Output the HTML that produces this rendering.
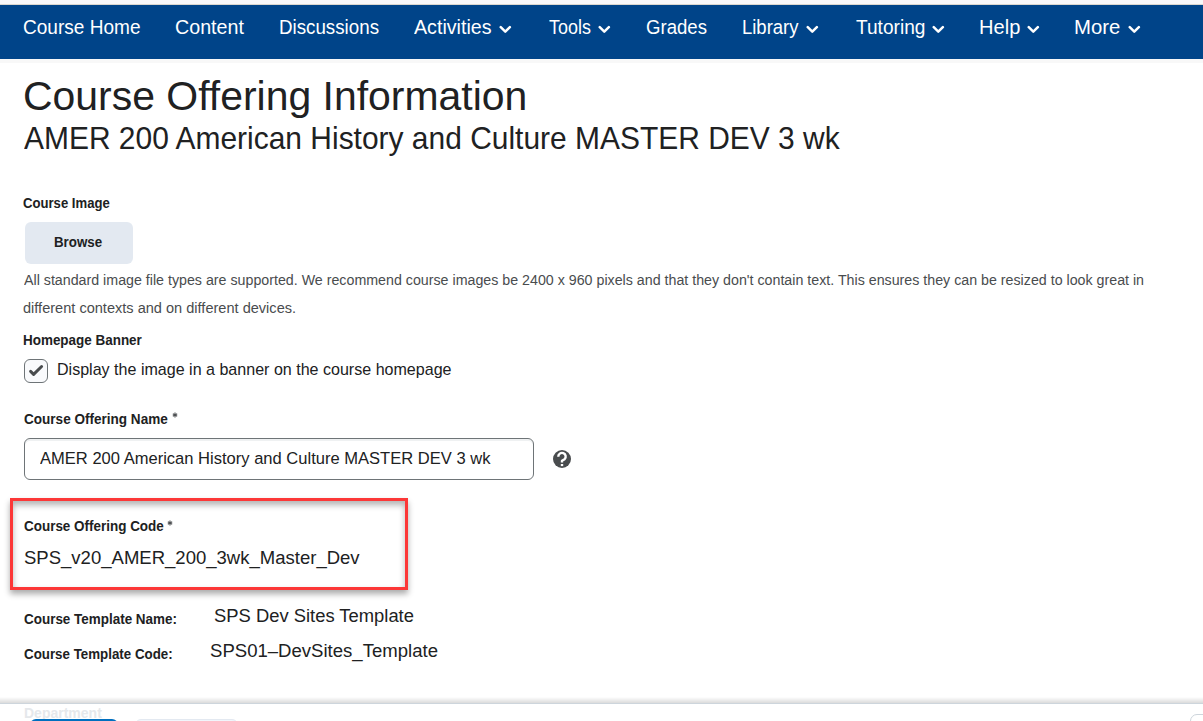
<!DOCTYPE html>
<html><head><meta charset="utf-8"><style>
html,body{margin:0;padding:0;}
body{width:1203px;height:721px;overflow:hidden;position:relative;background:#fff;font-family:"Liberation Sans",sans-serif;}
.t{position:absolute;white-space:nowrap;transform-origin:0 0;}
.abs{position:absolute;}
.chev{position:absolute;}
</style></head><body>
<div class="abs" style="left:0;top:0;width:1203px;height:4px;background:#f8f8fa"></div>
<div class="abs" style="left:0;top:4px;width:1203px;height:1px;background:#dcd7cf"></div>
<div class="abs" style="left:0;top:5px;width:1203px;height:54px;background:#004489"></div>
<div class="abs" style="left:0;top:59px;width:1203px;height:4px;background:#f8f8f8"></div>
<svg class="chev" style="left:499px;top:25px" width="13" height="9" viewBox="0 0 13 9"><path d="M1.75 2.2 L6.3 6.6 L10.85 2.2" fill="none" stroke="#fff" stroke-width="2.5" stroke-linecap="round" stroke-linejoin="round"/></svg><svg class="chev" style="left:598px;top:25px" width="13" height="9" viewBox="0 0 13 9"><path d="M1.75 2.2 L6.3 6.6 L10.85 2.2" fill="none" stroke="#fff" stroke-width="2.5" stroke-linecap="round" stroke-linejoin="round"/></svg><svg class="chev" style="left:806px;top:25px" width="13" height="9" viewBox="0 0 13 9"><path d="M1.75 2.2 L6.3 6.6 L10.85 2.2" fill="none" stroke="#fff" stroke-width="2.5" stroke-linecap="round" stroke-linejoin="round"/></svg><svg class="chev" style="left:932px;top:25px" width="13" height="9" viewBox="0 0 13 9"><path d="M1.75 2.2 L6.3 6.6 L10.85 2.2" fill="none" stroke="#fff" stroke-width="2.5" stroke-linecap="round" stroke-linejoin="round"/></svg><svg class="chev" style="left:1027px;top:25px" width="13" height="9" viewBox="0 0 13 9"><path d="M1.75 2.2 L6.3 6.6 L10.85 2.2" fill="none" stroke="#fff" stroke-width="2.5" stroke-linecap="round" stroke-linejoin="round"/></svg><svg class="chev" style="left:1128px;top:25px" width="13" height="9" viewBox="0 0 13 9"><path d="M1.75 2.2 L6.3 6.6 L10.85 2.2" fill="none" stroke="#fff" stroke-width="2.5" stroke-linecap="round" stroke-linejoin="round"/></svg>
<div class="abs" style="left:25px;top:222px;width:108px;height:42px;background:#e3e9f1;border-radius:6px"></div>
<div class="abs" style="left:24px;top:359px;width:22px;height:22px;border:1px solid #6e7477;border-radius:6px;background:#f9fafc"></div>
<svg class="abs" style="left:24px;top:359px" width="24" height="24" viewBox="0 0 24 24"><path d="M6.6 12.4 L9.6 15.4 L17.6 7.5" fill="none" stroke="#494c4e" stroke-width="3" stroke-linecap="round" stroke-linejoin="round"/></svg>
<div class="abs" style="left:24px;top:438px;width:508px;height:40px;border:1px solid #6e7477;border-radius:6px;background:#fff;box-shadow:inset 0 2px 0 0 rgba(177,185,190,.2)"></div>
<svg class="abs" style="left:553px;top:450px" width="18" height="18" viewBox="0 0 18 18"><circle cx="9" cy="9" r="9" fill="#494c4e"/><path d="M5.3 6.8 A3.7 3.7 0 1 1 11.6 9.2 L9 10.8 L9 12.6" fill="none" stroke="#fff" stroke-width="2.4" stroke-linejoin="round"/><rect x="7.8" y="14" width="2.4" height="2.1" fill="#fff"/></svg>
<div class="abs" style="left:10px;top:498px;width:392px;height:86px;border:3px solid #fc3737;box-shadow:0 4px 6px rgba(0,0,0,.33), inset 0 4px 6px rgba(0,0,0,.3)"></div>
<svg class="abs" style="left:166.7px;top:520.4px" width="6" height="6" viewBox="-3 -3 6 6"><g stroke="#494c4e" stroke-width="1.1"><line x1="0" y1="-2.5" x2="0" y2="2.5"/><line x1="-2.2" y1="-1.25" x2="2.2" y2="1.25"/><line x1="-2.2" y1="1.25" x2="2.2" y2="-1.25"/></g></svg>
<svg class="abs" style="left:171.7px;top:412.4px" width="6" height="6" viewBox="-3 -3 6 6"><g stroke="#494c4e" stroke-width="1.1"><line x1="0" y1="-2.5" x2="0" y2="2.5"/><line x1="-2.2" y1="-1.25" x2="2.2" y2="1.25"/><line x1="-2.2" y1="1.25" x2="2.2" y2="-1.25"/></g></svg>
<div class="t" style="left:23.05px;top:17.51px;font-size:19.84px;line-height:19.84px;color:#fff;font-weight:normal;transform:scaleX(0.9612)">Course Home</div><div class="t" style="left:175.02px;top:17.51px;font-size:19.84px;line-height:19.84px;color:#fff;font-weight:normal;transform:scaleX(0.9921)">Content</div><div class="t" style="left:278.5px;top:17.51px;font-size:19.84px;line-height:19.84px;color:#fff;font-weight:normal;transform:scaleX(0.9454)">Discussions</div><div class="t" style="left:414.0px;top:17.51px;font-size:19.84px;line-height:19.84px;color:#fff;font-weight:normal;transform:scaleX(0.9912)">Activities</div><div class="t" style="left:548.64px;top:17.51px;font-size:19.84px;line-height:19.84px;color:#fff;font-weight:normal;transform:scaleX(0.9046)">Tools</div><div class="t" style="left:646.07px;top:17.51px;font-size:19.84px;line-height:19.84px;color:#fff;font-weight:normal;transform:scaleX(0.9374)">Grades</div><div class="t" style="left:741.52px;top:17.51px;font-size:19.84px;line-height:19.84px;color:#fff;font-weight:normal;transform:scaleX(0.9313)">Library</div><div class="t" style="left:855.62px;top:17.51px;font-size:19.84px;line-height:19.84px;color:#fff;font-weight:normal;transform:scaleX(0.9641)">Tutoring</div><div class="t" style="left:979.39px;top:17.51px;font-size:19.84px;line-height:19.84px;color:#fff;font-weight:normal;transform:scaleX(1.013)">Help</div><div class="t" style="left:1074.37px;top:17.51px;font-size:19.84px;line-height:19.84px;color:#fff;font-weight:normal;transform:scaleX(1.0257)">More</div><div class="t" style="left:22.95px;top:76.02px;font-size:40.5px;line-height:40.5px;color:#202122;font-weight:normal;transform:scaleX(1.0107)">Course Offering Information</div><div class="t" style="left:24.0px;top:124.1px;font-size:30.95px;line-height:30.95px;color:#202122;font-weight:normal;transform:scaleX(0.9682)">AMER 200 American History and Culture MASTER DEV 3 wk</div><div class="t" style="left:23.47px;top:196.28px;font-size:14.2px;line-height:14.2px;color:#202122;font-weight:bold;transform:scaleX(0.925)">Course Image</div><div class="t" style="left:54.2px;top:235.2px;font-size:14.3px;line-height:14.3px;color:#202122;font-weight:bold;transform:scaleX(0.9321)">Browse</div><div class="t" style="left:24.0px;top:273.15px;font-size:14.35px;line-height:14.35px;color:#494c4e;font-weight:normal;transform:scaleX(0.9922)">All standard image file types are supported. We recommend course images be 2400 x 960 pixels and that they don't contain text. This ensures they can be resized to look great in</div><div class="t" style="left:23.42px;top:301.15px;font-size:14.35px;line-height:14.35px;color:#494c4e;font-weight:normal;transform:scaleX(1.0151)">different contexts and on different devices.</div><div class="t" style="left:23.19px;top:333.28px;font-size:14.2px;line-height:14.2px;color:#202122;font-weight:bold;transform:scaleX(0.9479)">Homepage Banner</div><div class="t" style="left:57.32px;top:362.25px;font-size:16.6px;line-height:16.6px;color:#202122;font-weight:normal;transform:scaleX(0.9676)">Display the image in a banner on the course homepage</div><div class="t" style="left:24.46px;top:412.28px;font-size:14.2px;line-height:14.2px;color:#202122;font-weight:bold;transform:scaleX(0.9548)">Course Offering Name</div><div class="t" style="left:40.0px;top:449.5px;font-size:16.3px;line-height:16.3px;color:#202122;font-weight:normal;transform:scaleX(1.0159)">AMER 200 American History and Culture MASTER DEV 3 wk</div><div class="t" style="left:24.46px;top:519.28px;font-size:14.2px;line-height:14.2px;color:#202122;font-weight:bold;transform:scaleX(0.9482)">Course Offering Code</div><div class="t" style="left:23.76px;top:549.34px;font-size:18.85px;line-height:18.85px;color:#202122;font-weight:normal;transform:scaleX(0.9829)">SPS_v20_AMER_200_3wk_Master_Dev</div><div class="t" style="left:24.46px;top:612.28px;font-size:14.2px;line-height:14.2px;color:#202122;font-weight:bold;transform:scaleX(0.9479)">Course Template Name:</div><div class="t" style="left:214.26px;top:607.47px;font-size:18.7px;line-height:18.7px;color:#202122;font-weight:normal;transform:scaleX(0.9838)">SPS Dev Sites Template</div><div class="t" style="left:24.47px;top:647.28px;font-size:14.2px;line-height:14.2px;color:#202122;font-weight:bold;transform:scaleX(0.9397)">Course Template Code:</div><div class="t" style="left:209.66px;top:641.13px;font-size:19.1px;line-height:19.1px;color:#202122;font-weight:normal;transform:scaleX(0.9718)">SPS01–DevSites_Template</div><div class="t" style="left:24.16px;top:706.28px;font-size:14.2px;line-height:14.2px;color:#e5e8eb;font-weight:bold;transform:scaleX(0.9871)">Department</div>
<div class="abs" style="left:0;top:697px;width:1203px;height:6px;background:linear-gradient(rgba(0,0,0,0),rgba(0,0,0,.14))"></div>
<div class="abs" style="left:0;top:703px;width:1203px;height:1px;background:#cdd5dc"></div>

<div class="abs" style="left:30px;top:719px;width:88px;height:20px;background:#006fbf;border-radius:6px"></div>
<div class="abs" style="left:135px;top:719px;width:101px;height:20px;background:#f1f5fb;border:1px solid #e3e9f1;border-radius:6px"></div>
<div class="abs" style="left:1190px;top:714px;width:30px;height:20px;border:1px solid #cdd5dc;border-radius:7px"></div>
</body></html>
